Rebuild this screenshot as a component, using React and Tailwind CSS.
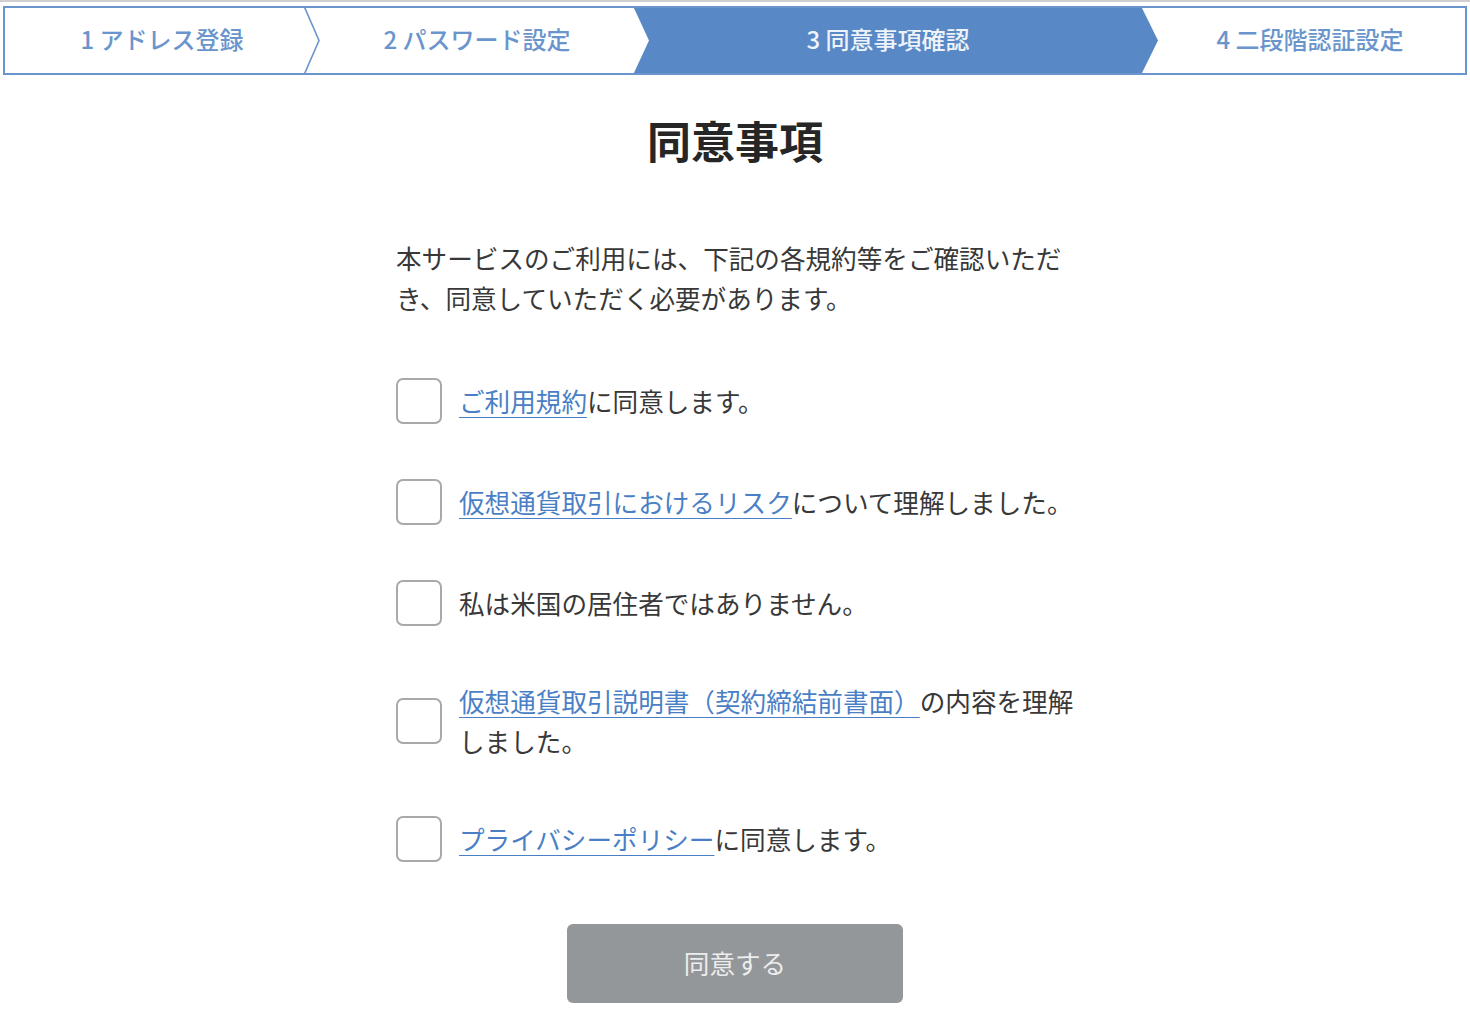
import React from "react";

const FONT = { fontFamily: '"Noto Sans CJK JP", "Noto Sans", sans-serif' };

const steps = [
  { label: "1 アドレス登録", w: "w-[314px]", pad: "" },
  { label: "2 パスワード設定", w: "w-[316px]", pad: "" },
  { label: "3 同意事項確認", w: "w-[506px]", pad: "", active: true },
  { label: "4 二段階認証設定", w: "flex-1", pad: "pl-[14px]" },
];

const Stepper = () => (
  <div className="relative mx-[3px] mt-[4px] flex h-[69px] border-2 border-[#6a95cc]">
    <svg
      className="absolute inset-0"
      width="1460"
      height="65"
      viewBox="0 0 1460 65"
    >
      <polygon
        points="628,-2 1136,-2 1153,32.5 1136,67 628,67 644,32.5"
        fill="#5889c6"
      />
      <polyline
        points="299,-2 314,32.5 299,67"
        fill="none"
        stroke="#6a95cc"
        strokeWidth="1.6"
      />
    </svg>
    {steps.map((s) => (
      <div
        key={s.label}
        className={`relative flex items-center justify-center ${s.w} ${s.pad} pb-[3px] text-[24px] font-medium ${
          s.active ? "text-[#eef3fa]" : "text-[#6a95cc]"
        }`}
      >
        {s.label}
      </div>
    ))}
  </div>
);

const Link = ({ children }) => (
  <a href="#" className="text-[#4a7fc6] underline decoration-1 underline-offset-[5px]">
    {children}
  </a>
);

const Item = ({ children }) => (
  <label className="flex items-center gap-[17px]">
    <span className="h-[46px] w-[46px] shrink-0 rounded-[7px] border-2 border-[#a9a9a9] bg-white" />
    <span className="leading-[40px]">{children}</span>
  </label>
);

export default function App() {
  return (
    <div className="min-h-[1024px] bg-white text-[#383838]" style={FONT}>
      <div className="h-[2px] bg-[#cfcfcf]" />
      <Stepper />
      <h1 className="mt-[37px] text-center text-[44px] font-bold leading-[56px] text-[#262626]">
        同意事項
      </h1>
      <div className="mx-auto mt-[70px] w-[688px] pl-[5px] text-[25.6px]">
        <p className="leading-[40px]">
          本サービスのご利用には、下記の各規約等をご確認いただき、同意していただく必要があります。
        </p>
        <div className="mt-[60px] flex flex-col gap-[55px]">
          <Item>
            <Link>ご利用規約</Link>に同意します。
          </Item>
          <Item>
            <Link>仮想通貨取引におけるリスク</Link>について理解しました。
          </Item>
          <Item>私は米国の居住者ではありません。</Item>
          <Item>
            <Link>仮想通貨取引説明書（契約締結前書面）</Link>の内容を理解しました。
          </Item>
          <Item>
            <Link>プライバシーポリシー</Link>に同意します。
          </Item>
        </div>
        <div className="mt-[62px] flex justify-center pr-[5px]">
          <button className="h-[79px] w-[336px] rounded-[6px] bg-[#94979a] text-[25.6px] text-[#eceded]">
            同意する
          </button>
        </div>
      </div>
    </div>
  );
}
